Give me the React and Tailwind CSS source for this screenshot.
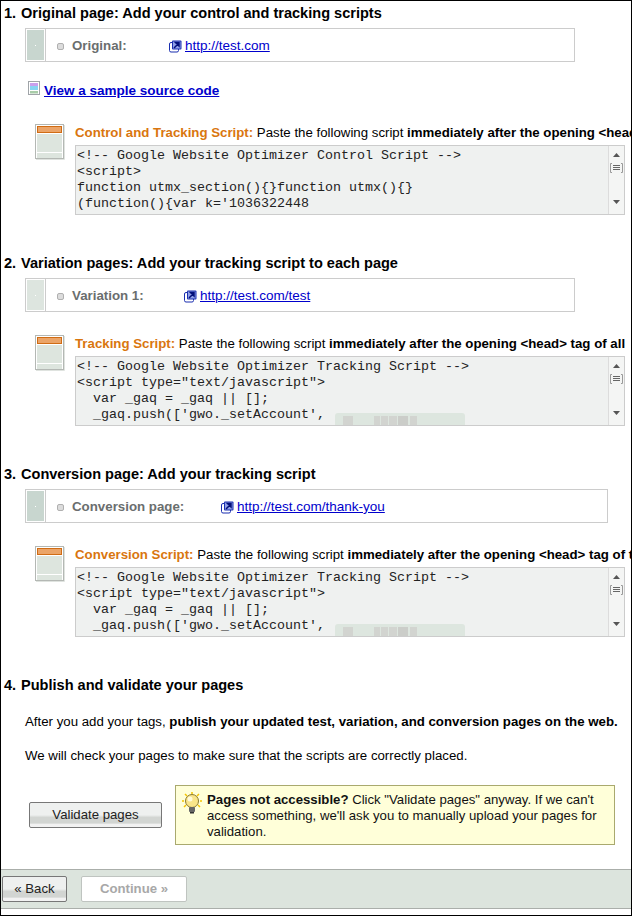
const FONT = "font-['Liberation_Sans',Arial,sans-serif]";

function Heading({ n, children, className = "" }) {
  return (
    <div className={`flex h-4 text-[14.55px] leading-4 font-bold text-black whitespace-nowrap ${className}`}>
      <span className="w-[17px] ml-[3px]">{n}.</span>
      <span>{children}</span>
    </div>
  );
}

function ExtIcon() {
  return (
    <svg width="13" height="13" viewBox="0 0 13 13" className="shrink-0">
      <rect x="0.5" y="2.5" width="9" height="9.5" rx="1.5" fill="#fff" stroke="#1a2fb0" />
      <rect x="3" y="0.5" width="9.5" height="9" rx="1" fill="#1a2fb0" />
      <rect x="4" y="1.5" width="7.5" height="7" fill="#8fa0e8" />
      <path d="M5 8 L8.5 4.5 M6.5 2.5 H10 V6 Z" stroke="#04107a" strokeWidth="1.5" fill="#04107a" />
    </svg>
  );
}

function PageRow({ label, href, labelW, accent, width }) {
  return (
    <div className={`flex ml-6 mt-[7px] h-[34px] border border-[#cccccc] bg-white ${width}`}>
      <div className="relative w-5 shrink-0 border-r border-[#cccccc] p-px">
        <div className={`h-full w-[17px] ${accent}`}></div>
        <div className="absolute left-[9px] top-4 size-px bg-white"></div>
      </div>
      <div className="flex items-center pl-[11px] pt-[2px] text-[13.5px]">
        <div className="size-[7px] rounded-[2px] border border-[#b0b0b0] bg-[#dcdcdc] mr-2"></div>
        <span className={`text-[13.3px] font-bold text-[#6a6e6e] ${labelW}`}>{label}</span>
        <ExtIcon />
        <a className="ml-[3px] text-[#0000cc] underline">{href}</a>
      </div>
    </div>
  );
}

function ScriptIcon() {
  return (
    <svg width="30" height="36" viewBox="0 0 30 36" className="shrink-0 ml-[34px]">
      <rect x="0.5" y="0.5" width="28" height="34" fill="#fff" stroke="#b4b8b4" />
      <path d="M29.5 1 V35.5 H1" fill="none" stroke="#dfe3df" />
      <rect x="2.5" y="2.5" width="24" height="6" fill="#eba468" stroke="#d06c14" />
      <rect x="2" y="10" width="25" height="18" fill="#dde5de" />
      <rect x="2" y="29" width="25" height="5" fill="#dde5de" />
    </svg>
  );
}

function Smudge() {
  return (
    <div className="absolute left-[259px] top-[56px] flex h-[19px] w-[130px] items-center rounded-[3px] bg-[#dde6df] pl-2">
      <div className="h-[13px] w-[10px] bg-[#d2d4d0]"></div>
      <div className="ml-[21px] h-[13px] w-[6px] bg-[#d2d4d0]"></div>
      <div className="ml-px h-[13px] w-[7px] bg-[#d2d4d0]"></div>
      <div className="ml-px h-[13px] w-[8px] bg-[#d2d4d0]"></div>
      <div className="ml-px h-[13px] w-[10px] bg-[#cbcdc9]"></div>
      <div className="ml-[2px] h-[13px] w-[7px] bg-[#d2d4d0]"></div>
    </div>
  );
}

function Scrollbar() {
  return (
    <div className="absolute right-0 top-0 flex h-full w-4 flex-col items-center border-l border-[#dcdcdc] bg-[#f4f5f4]">
      <svg width="9" height="5" viewBox="0 0 9 5" className="mt-[7px]"><path d="M4.5 0 L8 4 H1 Z" fill="#555" /></svg>
      <svg width="13" height="10" viewBox="0 0 13 10" className="mt-[5px]">
        <path d="M2 .5 H.5 V9.5 H2 M11 .5 H12.5 V9.5 H11" fill="none" stroke="#9a9a9a" />
        <path d="M3 2.5 H10 M3 4.5 H10 M3 6.5 H10" stroke="#666" />
      </svg>
      <svg width="9" height="5" viewBox="0 0 9 5" className="mt-[26px]"><path d="M4.5 5 L8 1 H1 Z" fill="#555" /></svg>
    </div>
  );
}

function ScriptBlock({ title, rest, mt, lines, smudge }) {
  return (
    <div className={`flex ${mt}`}>
      <ScriptIcon />
      <div className="ml-[10px] min-w-0">
        <div className="h-[21px] text-[13.25px] leading-[18px] whitespace-nowrap text-black">
          <span className="font-bold text-[#d9760f]">{title}</span> {rest}
        </div>
        <div className="relative h-[70px] w-[550px] overflow-hidden border border-[#cccccc] bg-[#eff1f0] pl-[1px] pt-[2px]">
          <pre className="font-['Liberation_Mono','Courier_New',monospace] text-[13.33px] leading-4 text-[#222]">{lines.join("\n")}</pre>
          {smudge && <Smudge />}
          <Scrollbar />
        </div>
      </div>
    </div>
  );
}

function Rest({ tail }) {
  return (
    <>
      Paste the following script <b>immediately after the opening &lt;head&gt; tag {tail}</b>
    </>
  );
}

const tracking = [
  "<!-- Google Website Optimizer Tracking Script -->",
  '<script type="text/javascript">',
  "  var _gaq = _gaq || [];",
  "  _gaq.push(['gwo._setAccount', ",
];

function Bulb() {
  return (
    <svg width="20" height="22" viewBox="0 0 20 22" className="shrink-0">
      <path d="M10 0 V2 M3 2 L5 4 M17 2 L15 4 M0 9 H2 M18 9 H20 M2 15 L4 13 M18 15 L16 13" stroke="#f5c400" strokeWidth="1.5" />
      <circle cx="10" cy="9" r="6.5" fill="#f9e58a" stroke="#8a7a30" />
      <circle cx="8" cy="7" r="2.5" fill="#fffbe0" />
      <rect x="7" y="15" width="6" height="5" rx="1" fill="#666" />
      <rect x="8" y="20" width="4" height="1.5" fill="#333" />
    </svg>
  );
}

function GelButton({ children, className = "" }) {
  return (
    <div className={`flex h-[26px] items-center justify-center rounded-[2px] border border-[#777] text-[13.2px] text-[#222] bg-[linear-gradient(#eef0ef_0,#eef0ef_50%,#d2d5d2_60%,#d2d5d2_84%,#f2f2f2_88%)] ${className}`}>
      {children}
    </div>
  );
}

export default function App() {
  return (
    <div className={`${FONT} relative flex h-[916px] w-[632px] flex-col overflow-hidden border border-black bg-white pt-1`}>
      <Heading n="1">Original page: Add your control and tracking scripts</Heading>
      <PageRow label="Original:" href="http://test.com" labelW="w-[97px]" accent="bg-[#c8d6cf]" width="w-[550px]" />

      <div className="ml-[27px] mt-[19px] flex h-4 items-start">
        <svg width="13" height="15" viewBox="0 0 13 15" className="shrink-0">
          <rect x="0.5" y="0.5" width="11" height="13" fill="#fff" stroke="#a0a4a8" />
          <rect x="2" y="2" width="8" height="3" fill="#c9a0ec" />
          <rect x="2" y="5" width="8" height="4" fill="#86d4f2" />
          <rect x="2" y="10" width="8" height="2.5" fill="#a8cca8" />
        </svg>
        <a className="ml-[3px] mt-[2px] text-[13.5px] leading-4 font-bold text-[#0000cc] underline">View a sample source code</a>
      </div>

      <ScriptBlock
        mt="mt-[27px]"
        title="Control and Tracking Script:"
        rest={<>Paste the following script <b>immediately after the opening &lt;head&gt; tag</b></>}
        lines={[
          "<!-- Google Website Optimizer Control Script -->",
          "<script>",
          "function utmx_section(){}function utmx(){}",
          "(function(){var k='1036322448",
        ]}
      />

      <Heading n="2" className="mt-10">Variation pages: Add your tracking script to each page</Heading>
      <PageRow label="Variation 1:" href="http://test.com/test" labelW="w-[112px]" accent="bg-[#dde5df]" width="w-[550px]" />
      <ScriptBlock mt="mt-[23px]" title="Tracking Script:" rest={<Rest tail="of all" />} lines={tracking} smudge />

      <Heading n="3" className="mt-10">Conversion page: Add your tracking script</Heading>
      <PageRow label="Conversion page:" href="http://test.com/thank-you" labelW="w-[149px]" accent="bg-[#c8d6cf]" width="w-[583px]" />
      <ScriptBlock mt="mt-[23px]" title="Conversion Script:" rest={<Rest tail="of the" />} lines={tracking} smudge />

      <Heading n="4" className="mt-10">Publish and validate your pages</Heading>
      <div className="ml-6 mt-5 h-4 text-[13.25px] leading-[18px] text-black whitespace-nowrap">
        After you add your tags, <b>publish your updated test, variation, and conversion pages on the web.</b>
      </div>
      <div className="ml-6 mt-[18px] h-4 text-[13.25px] leading-[18px] text-black">
        We will check your pages to make sure that the scripts are correctly placed.
      </div>

      <div className="ml-7 mt-[22px] flex h-[60px] items-start">
        <GelButton className="mt-[17px] w-[133px]">Validate pages</GelButton>
        <div className="ml-[13px] flex h-[60px] w-[440px] border border-[#a9a96e] bg-[#ffffd9] pl-[6px] pt-[6px]">
          <Bulb />
          <div className="ml-[5px] text-[13.2px] leading-4 text-[#111]">
            <b>Pages not accessible?</b> Click "Validate pages" anyway. If we can't access something, we'll ask you to manually upload your pages for validation.
          </div>
        </div>
      </div>

      <div className="mt-6 flex h-10 items-center border-y border-[#aaaeaa] bg-[#dce4dd] pl-px">
        <GelButton className="w-[65px]">« Back</GelButton>
        <div className="ml-[14px] flex h-[26px] w-[106px] items-center justify-center rounded-[2px] border border-[#bfc4c0] bg-white text-[13.2px] font-bold text-[#a8a8a8]">
          Continue »
        </div>
      </div>
    </div>
  );
}
